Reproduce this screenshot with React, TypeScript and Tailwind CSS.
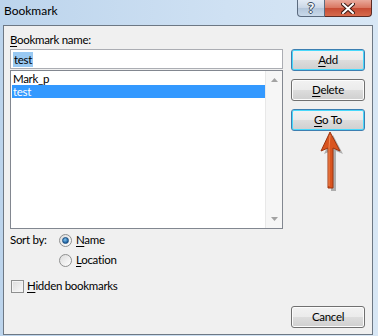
import React from 'react';

const font = { fontFamily: 'Lato, "Noto Sans", sans-serif' };

const WinButton = ({ label, mnemonic, focused, className = '' }: { label: string; mnemonic?: number; focused?: boolean; className?: string }) => {
  const m = mnemonic ?? -1;
  return (
    <div
      className={`h-[22px] w-[74px] rounded-[3px] border flex items-center justify-center text-black ${
        focused ? 'border-[#3c7fb1] shadow-[inset_0_0_0_1px_#48d8fb]' : 'border-[#707070] shadow-[inset_0_0_0_1px_#fcfcfc]'
      } bg-[linear-gradient(#f2f2f2_0%,#ebebeb_50%,#dddddd_50%,#cfcfcf_100%)] ${className}`}
    >
      {m >= 0 ? (
        <span>
          {label.slice(0, m)}
          <span className="underline underline-offset-2">{label[m]}</span>
          {label.slice(m + 1)}
        </span>
      ) : (
        <span>{label}</span>
      )}
    </div>
  );
};

const Radio = ({ checked }: { checked?: boolean }) => (
  <div className="w-[13px] h-[13px] rounded-full border border-[#8e8f8f] bg-[linear-gradient(135deg,#dcdcdc,#ffffff)] flex items-center justify-center">
    {checked && <div className="w-[7px] h-[7px] rounded-full bg-[radial-gradient(circle_at_40%_35%,#7fc4f0,#1d5f9e_70%)] border border-[#1b4f82]" />}
  </div>
);

const Mn = ({ c }: { c: string }) => <span className="underline underline-offset-2">{c}</span>;

const Arrow = () => (
  <svg className="absolute left-[316px] top-[131px]" width="30" height="60" viewBox="0 0 30 60">
    <g transform="translate(3,3)" fill="#000" opacity="0.28">
      <path d="M14 1 L24 20 L17 17 L17 57 L12 57 L12 17 L5 20 Z" />
    </g>
    <path d="M14 1 L24 20 L17 17 L17 57 L12 57 L12 17 L5 20 Z" fill="#d9541f" stroke="#9b3410" strokeWidth="1" strokeLinejoin="round" />
    <path d="M14 4 L13 17 L13 55" stroke="#f08a55" strokeWidth="1" fill="none" />
  </svg>
);

export default function App() {
  return (
    <div className="relative w-[378px] h-[336px] overflow-hidden bg-[linear-gradient(90deg,#bcd4ec,#cfe1f3_60%,#d8e7f5)] select-none" style={font}>
      {/* title bar */}
      <div className="h-[25px] flex items-start">
        <div className="pl-[4px] pt-[3px] text-[12px] leading-[16px] text-black">Bookmark</div>
        <div className="ml-auto mr-[6px] flex">
          <div className="w-[28px] h-[17px] border border-[#5b6b7f] border-t-0 rounded-bl-[4px] bg-[linear-gradient(#e3ebf5,#c9d6e6_50%,#b3c5da_50%,#c9d9ea)] flex items-center justify-center text-[14px] leading-none font-black text-[#f4f7fb] [text-shadow:1px_0_0_#3d4c60,-1px_0_0_#3d4c60,0_1px_0_#3d4c60,0_-1px_0_#3d4c60]">
            ?
          </div>
          <div className="w-[47px] h-[17px] border border-[#5b2b24] border-t-0 border-l-0 rounded-br-[4px] bg-[linear-gradient(#e9a99b,#d9755f_50%,#c64a33_50%,#d66a4c)] flex items-center justify-center">
            <svg width="14" height="11" viewBox="0 0 14 11">
              <path d="M2 1 L12 10 M12 1 L2 10" stroke="#3b1a14" strokeWidth="4" strokeLinecap="square" />
              <path d="M2 1 L12 10 M12 1 L2 10" stroke="#ffffff" strokeWidth="2" strokeLinecap="square" />
            </svg>
          </div>
        </div>
      </div>

      {/* client area */}
      <div className="ml-[3px] w-[370px] h-[310px] border border-[#6d7884] bg-[#f0f0f0] flex pl-[6px] text-[11.5px] tracking-[-0.3px] text-black">
        <div className="w-[273px] flex flex-col">
          <div className="mt-[6px] h-[16px] leading-[16px]">
            <Mn c="B" />ookmark name:
          </div>
          <div className="mt-[1px] h-[20px] border border-[#abadb3] bg-white flex items-center pl-[2px]">
            <span className="bg-[#99c9f2] leading-[15px] px-px">test</span>
          </div>
          <div className="mt-[1px] h-[159px] border border-[#828790] bg-white flex">
            <div className="flex-1 pt-[1px] pl-px">
              <div className="h-[13px] leading-[13px] pl-px">Mark_p</div>
              <div className="h-[13px] leading-[13px] pl-px bg-[#3399ff] text-white">test</div>
            </div>
            <div className="w-[17px] bg-[#f6f6f6] border-l border-[#e8e8e8] flex flex-col justify-between py-[7px] items-center">
              <svg width="7" height="4" viewBox="0 0 7 4"><path d="M0 4 L3.5 0 L7 4 Z" fill="#a3a3a3" /></svg>
              <svg width="7" height="4" viewBox="0 0 7 4"><path d="M0 0 L3.5 4 L7 0 Z" fill="#a3a3a3" /></svg>
            </div>
          </div>
          <div className="mt-[3px] h-[16px] flex items-center">
            <div className="w-[49px]">Sort by:</div>
            <Radio checked />
            <div className="ml-[4px]">
              <Mn c="N" />ame
            </div>
          </div>
          <div className="mt-[4px] h-[16px] flex items-center pl-[49px]">
            <Radio />
            <div className="ml-[4px]">
              <Mn c="L" />ocation
            </div>
          </div>
          <div className="mt-[10px] h-[16px] flex items-center pl-px">
            <div className="w-[13px] h-[13px] border border-[#8e8f8f] bg-[linear-gradient(135deg,#dcdcdc,#fafafa)] shadow-[inset_0_0_0_1px_#f4f4f4]" />
            <div className="ml-[3px]">
              <Mn c="H" />idden bookmarks
            </div>
          </div>
        </div>
        <div className="ml-[8px] flex flex-col pb-[6px]">
          <WinButton label="Add" mnemonic={0} focused className="mt-[23px]" />
          <WinButton label="Delete" mnemonic={0} className="mt-[8px]" />
          <WinButton label="Go To" mnemonic={0} focused className="mt-[8px]" />
          <WinButton label="Cancel" className="mt-auto" />
        </div>
      </div>

      <Arrow />
    </div>
  );
}
